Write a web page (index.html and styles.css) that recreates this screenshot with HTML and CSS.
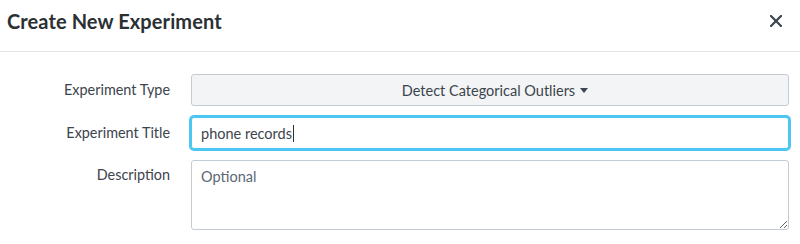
FILE: index.html
```html
<!DOCTYPE html>
<html>
<head>
<meta charset="utf-8">
<link rel="stylesheet" href="styles.css">
</head>
<body>
<div class="modal">
  <div class="header">
    <h1 class="title">Create New Experiment</h1>
    <button class="close" aria-label="Close">
      <svg width="12" height="12" viewBox="0 0 12 12"><path d="M1 1L11 11M11 1L1 11" stroke="#3c444d" stroke-width="2.2" stroke-linecap="square"/></svg>
    </button>
  </div>
  <div class="body">
    <div class="form">
      <label class="label">Experiment Type</label>
      <div class="select"><span>Detect Categorical Outliers</span><span class="caret"></span></div>
      <label class="label">Experiment Title</label>
      <div class="input focused"><span>phone records</span><span class="cursor"></span></div>
      <label class="label label-top">Description</label>
      <textarea class="textarea" placeholder="Optional"></textarea>
    </div>
  </div>
</div>
</body>
</html>
```
FILE: styles.css
```css
html, body {
  margin: 0;
  padding: 0;
  background: #fff;
  font-family: Lato, "Liberation Sans", sans-serif;
  color: #3c444d;
}
.modal {
  width: 800px;
  height: 244px;
  overflow: hidden;
}
.header {
  height: 51px;
  border-bottom: 1px solid #e1e6eb;
  display: flex;
  align-items: center;
  justify-content: space-between;
  padding: 0 18px 0 7px;
  box-sizing: content-box;
}
.title {
  margin: 0;
  font-size: 20px;
  font-weight: 700;
  color: #2b3033;
  margin-top: -9px;
  letter-spacing: 0.1px;
}
.close {
  border: 0;
  background: none;
  padding: 0;
  width: 12px;
  height: 12px;
  margin-top: -10px;
  display: flex;
}
.body {
  padding: 22px 11px 0 0;
}
.form {
  display: grid;
  grid-template-columns: 170px 1fr;
  column-gap: 21px;
  row-gap: 11px;
}
.label {
  font-size: 14.4px;
  text-align: right;
  line-height: 32px;
  color: #3c444d;
}
.label-top {
  line-height: 32px;
  margin-top: -1px;
}
.select {
  height: 32px;
  box-sizing: border-box;
  border: 1px solid #c3cbd4;
  border-radius: 3px;
  background: #f2f4f5;
  display: flex;
  align-items: center;
  justify-content: center;
  gap: 5px;
  font-size: 14.5px;
  color: #3c444d;
  padding-left: 10px;
}
.caret {
  width: 0;
  height: 0;
  border-left: 4px solid transparent;
  border-right: 4px solid transparent;
  border-top: 5px solid #3c444d;
  margin-top: 1px;
}
.input {
  height: 32px;
  box-sizing: border-box;
  border: 1px solid #c3cbd4;
  border-radius: 3px;
  background: #fff;
  display: flex;
  align-items: center;
  padding-left: 9px;
  font-size: 14.5px;
  color: #3c444d;
}
.input.focused {
  border-color: #4cc6f2;
  box-shadow: 0 0 0 2px #4cc6f2;
}
.cursor {
  width: 1px;
  height: 17px;
  background: #2b3033;
  margin-left: 1px;
}
.textarea {
  display: block;
  height: 70px;
  box-sizing: border-box;
  border: 1px solid #c3cbd4;
  border-radius: 3px;
  background: #fff;
  padding: 7px 9px;
  font-family: Lato, "Liberation Sans", sans-serif;
  font-size: 14.5px;
  color: #3c444d;
  resize: vertical;
  margin: 0;
  width: 100%;
}
.textarea::placeholder {
  color: #5c6773;
  opacity: 1;
}
```
